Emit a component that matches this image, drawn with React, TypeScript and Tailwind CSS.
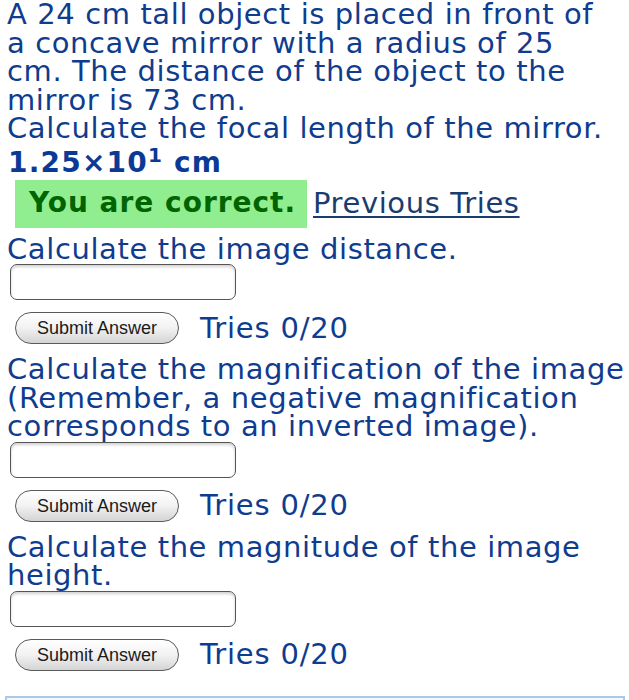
import React from 'react';

function AnswerInput() {
  return (
    <input
      type="text"
      className="mt-[1px] block h-[36px] w-[226px] ml-[3px] rounded-[7px] border border-[#555] bg-white shadow-[inset_0_2px_3px_rgba(0,0,0,0.18)] outline-none"
    />
  );
}

function SubmitRow() {
  return (
    <div className="mt-[12px] flex items-center gap-[21px] pl-[8px]">
      <button
        type="button"
        className="h-[32px] w-[164px] rounded-full border border-[#5a5a5a] bg-gradient-to-b from-white via-[#f2f2f2] to-[#d4d4d4] font-['Liberation_Sans',Arial,sans-serif] text-[18px] leading-none tracking-normal text-[#1a1a1a]"
      >
        Submit Answer
      </button>
      <span className="tracking-[0.8px]">Tries 0/20</span>
    </div>
  );
}

export default function App() {
  return (
    <div className="h-[700px] w-[629px] overflow-hidden bg-white pl-[7px] font-['DejaVu_Sans',Verdana,sans-serif] text-[29px] leading-[28.5px] tracking-[0.6px] text-[#0f3c8e] whitespace-nowrap">
      {/* question */}
      <p>
        A 24 cm tall object is placed in front of
        <br />
        a concave mirror with a radius of 25
        <br />
        cm. The distance of the object to the
        <br />
        mirror is 73 cm.
        <br />
        Calculate the focal length of the mirror.
      </p>

      {/* part 1: answered */}
      <div className="mt-[6px] pl-[1px] text-[28px] font-bold leading-[28px] tracking-[1.2px] text-[#0b3a96]">
        1.25×10<sup className="relative -top-[10px] text-[20px]">1</sup> cm
      </div>
      <div className="mt-[3px] flex items-center gap-[6px] pl-[8px]">
        <div className="flex h-[48px] w-[292px] items-center bg-[#90ee90] pl-[14px] text-[28px] font-bold tracking-[1px] text-[#006400]">
          You are correct.
        </div>
        <a href="#" className="text-[#1b3c6e] underline decoration-[2px] underline-offset-[3px]">
          Previous Tries
        </a>
      </div>

      {/* part 2 */}
      <p className="mt-[7px]">Calculate the image distance.</p>
      <AnswerInput />
      <SubmitRow />

      {/* part 3 */}
      <p className="mt-[11px]">
        Calculate the magnification of the image
        <br />
        (Remember, a negative magnification
        <br />
        corresponds to an inverted image).
      </p>
      <AnswerInput />
      <SubmitRow />

      {/* part 4 */}
      <p className="mt-[11px]">
        Calculate the magnitude of the image
        <br />
        height.
      </p>
      <AnswerInput />
      <SubmitRow />

      <div className="mt-[25px] -ml-[2px] h-[40px] w-[620px] border-2 border-[#a9c8ec] bg-[#f5f9ff]" />
    </div>
  );
}
